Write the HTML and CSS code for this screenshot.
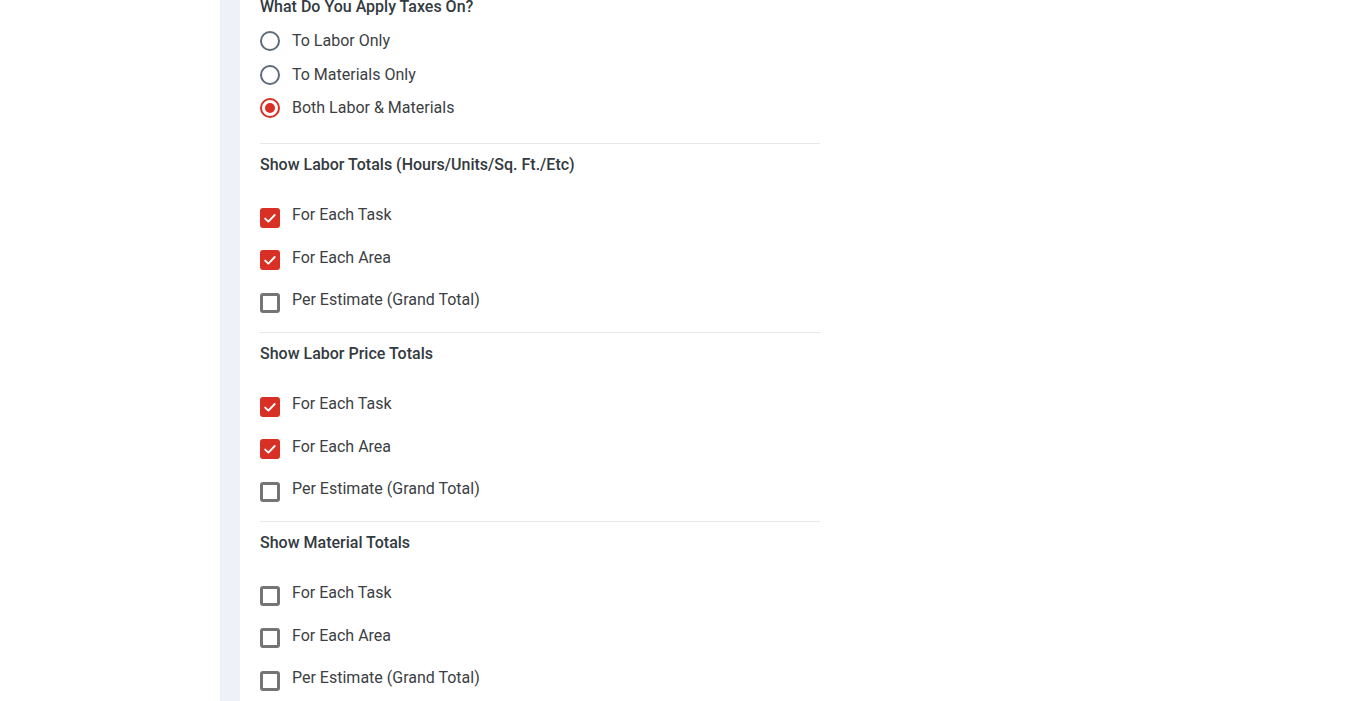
FILE: index.html
```html
<!DOCTYPE html>
<html>
<head>
<meta charset="utf-8">
<link rel="stylesheet" href="styles.css">
</head>
<body>
<div class="page">
  <div class="strip"></div>
  <div class="content">
    <section class="group radios">
      <h3 class="title">What Do You Apply Taxes On?</h3>
      <label class="opt radio-opt"><span class="radio"></span><span class="lbl">To Labor Only</span></label>
      <label class="opt radio-opt"><span class="radio"></span><span class="lbl">To Materials Only</span></label>
      <label class="opt radio-opt"><span class="radio on"></span><span class="lbl">Both Labor &amp; Materials</span></label>
    </section>
    <section class="group checks">
      <h3 class="title">Show Labor Totals (Hours/Units/Sq. Ft./Etc)</h3>
      <label class="opt check-opt"><span class="box on"><svg viewBox="0 0 20 20" width="20" height="20"><path d="M5.2 10.6l3.2 3 6.3-6.6" fill="none" stroke="#fff" stroke-width="1.9" stroke-linecap="round" stroke-linejoin="round"/></svg></span><span class="lbl">For Each Task</span></label>
      <label class="opt check-opt"><span class="box on"><svg viewBox="0 0 20 20" width="20" height="20"><path d="M5.2 10.6l3.2 3 6.3-6.6" fill="none" stroke="#fff" stroke-width="1.9" stroke-linecap="round" stroke-linejoin="round"/></svg></span><span class="lbl">For Each Area</span></label>
      <label class="opt check-opt"><span class="box"></span><span class="lbl">Per Estimate (Grand Total)</span></label>
    </section>
    <section class="group checks">
      <h3 class="title">Show Labor Price Totals</h3>
      <label class="opt check-opt"><span class="box on"><svg viewBox="0 0 20 20" width="20" height="20"><path d="M5.2 10.6l3.2 3 6.3-6.6" fill="none" stroke="#fff" stroke-width="1.9" stroke-linecap="round" stroke-linejoin="round"/></svg></span><span class="lbl">For Each Task</span></label>
      <label class="opt check-opt"><span class="box on"><svg viewBox="0 0 20 20" width="20" height="20"><path d="M5.2 10.6l3.2 3 6.3-6.6" fill="none" stroke="#fff" stroke-width="1.9" stroke-linecap="round" stroke-linejoin="round"/></svg></span><span class="lbl">For Each Area</span></label>
      <label class="opt check-opt"><span class="box"></span><span class="lbl">Per Estimate (Grand Total)</span></label>
    </section>
    <section class="group checks">
      <h3 class="title">Show Material Totals</h3>
      <label class="opt check-opt"><span class="box"></span><span class="lbl">For Each Task</span></label>
      <label class="opt check-opt"><span class="box"></span><span class="lbl">For Each Area</span></label>
      <label class="opt check-opt"><span class="box"></span><span class="lbl">Per Estimate (Grand Total)</span></label>
    </section>
  </div>
</div>
</body>
</html>
```

FILE: styles.css
```css
html, body {
  margin: 0;
  padding: 0;
  background: #fff;
  height: 100%;
  overflow: hidden;
}
body {
  font-family: Roboto, "Liberation Sans", Arial, sans-serif;
  color: #3c4043;
}
.page {
  display: flex;
  height: 701px;
  padding-left: 220px;
}
.strip {
  width: 20px;
  flex: none;
  background: #eef2f8;
}
.content {
  width: 560px;
  margin-left: 20px;
  margin-top: -12px;
}
.group + .group {
  border-top: 1px solid #e8e8e8;
}
.title {
  margin: 0;
  font-size: 16px;
  font-weight: 500;
  line-height: 20px;
  color: #333a40;
}
.opt {
  display: flex;
  align-items: center;
  font-size: 16px;
  line-height: 20px;
  color: #3c4043;
}
.radios .title {
  padding-top: 9px;
}
.radios {
  padding-bottom: 25px;
}
.radio-opt {
  height: 20px;
  margin-top: 13.5px;
}
.radios .title + .radio-opt {
  margin-top: 14px;
}
.radio {
  width: 16px;
  height: 16px;
  border: 2px solid #5f6b7c;
  border-radius: 50%;
  flex: none;
  margin-right: 12px;
  box-sizing: content-box;
  position: relative;
}
.radio.on {
  border-color: #d93025;
}
.radio.on::after {
  content: "";
  position: absolute;
  left: 3px;
  top: 3px;
  width: 10px;
  height: 10px;
  border-radius: 50%;
  background: #d93025;
}
.checks .title {
  padding-top: 11px;
}
.checks {
  padding-bottom: 22px;
}
.check-opt {
  height: 20px;
  margin-top: 22.5px;
  align-items: flex-start;
}
.checks .title + .check-opt {
  margin-top: 30px;
}
.box {
  width: 20px;
  height: 20px;
  border: 3px solid #757575;
  border-radius: 3px;
  flex: none;
  margin-right: 12px;
  margin-top: 2.5px;
  position: relative;
  box-sizing: border-box;
}
.box.on {
  background: #d93025;
  border: none;
}
.box svg {
  position: absolute;
  left: 0;
  top: 0;
}
.lbl {
  display: block;
}
```
